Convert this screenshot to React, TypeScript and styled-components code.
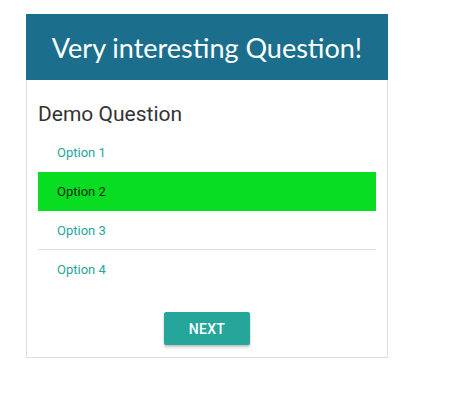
import React, { useState } from "react";
import styled, { createGlobalStyle } from "styled-components";

const GlobalStyle = createGlobalStyle`
  body {
    margin: 0;
    background: #fff;
    font-family: Roboto, "Liberation Sans", sans-serif;
  }
`;

const Page = styled.div`
  padding: 14px 0 0 26px;
`;

const Card = styled.div`
  width: 360px;
  border: 1px solid #e0e0e0;
  border-top: none;
  background: #fff;
  display: flex;
  flex-direction: column;
`;

const Header = styled.div`
  height: 66px;
  margin: 0 -1px;
  background: #1b6f8d;
  display: flex;
  align-items: center;
  justify-content: center;
`;

const Title = styled.h1`
  margin: 0;
  color: #fff;
  font-family: Lato, "Open Sans", sans-serif;
  font-size: 27px;
  font-weight: 400;
`;

const Body = styled.div`
  padding: 0 11px 12px 11px;
  display: flex;
  flex-direction: column;
`;

const Question = styled.h2`
  margin: 0;
  padding: 20px 0 5px 0;
  color: #333;
  font-size: 21px;
  font-weight: 400;
  line-height: 28px;
`;

const OptionList = styled.ul`
  list-style: none;
  margin: 0;
  padding: 0;
`;

const OptionRow = styled.li<{ $active: boolean; $divider: boolean }>`
  height: 39px;
  box-sizing: border-box;
  display: flex;
  align-items: center;
  padding-left: 19px;
  font-size: 13px;
  cursor: pointer;
  color: ${(p) => (p.$active ? "#0b2a0b" : "#26a69a")};
  background: ${(p) => (p.$active ? "#08dd22" : "transparent")};
  border-bottom: ${(p) => (p.$divider ? "1px solid #e0e0e0" : "none")};
`;

const Footer = styled.div`
  display: flex;
  justify-content: center;
  padding-top: 23px;
`;

const NextButton = styled.button`
  width: 86px;
  height: 33px;
  border: none;
  border-radius: 2px;
  background: #26a69a;
  color: #fff;
  font-family: Roboto, "Liberation Sans", sans-serif;
  font-size: 14px;
  font-weight: 500;
  letter-spacing: 0.3px;
  box-shadow: 0 2px 3px rgba(0, 0, 0, 0.25);
  cursor: pointer;
`;

const options = ["Option 1", "Option 2", "Option 3", "Option 4"];

export default function App() {
  const [selected, setSelected] = useState(1);

  return (
    <Page>
      <GlobalStyle />
      <Card>
        <Header>
          <Title>Very interesting Question!</Title>
        </Header>
        <Body>
          <Question>Demo Question</Question>
          <OptionList>
            {options.map((opt, i) => (
              <OptionRow
                key={opt}
                $active={i === selected}
                $divider={i === 2}
                onClick={() => setSelected(i)}
              >
                {opt}
              </OptionRow>
            ))}
          </OptionList>
          <Footer>
            <NextButton>NEXT</NextButton>
          </Footer>
        </Body>
      </Card>
    </Page>
  );
}
